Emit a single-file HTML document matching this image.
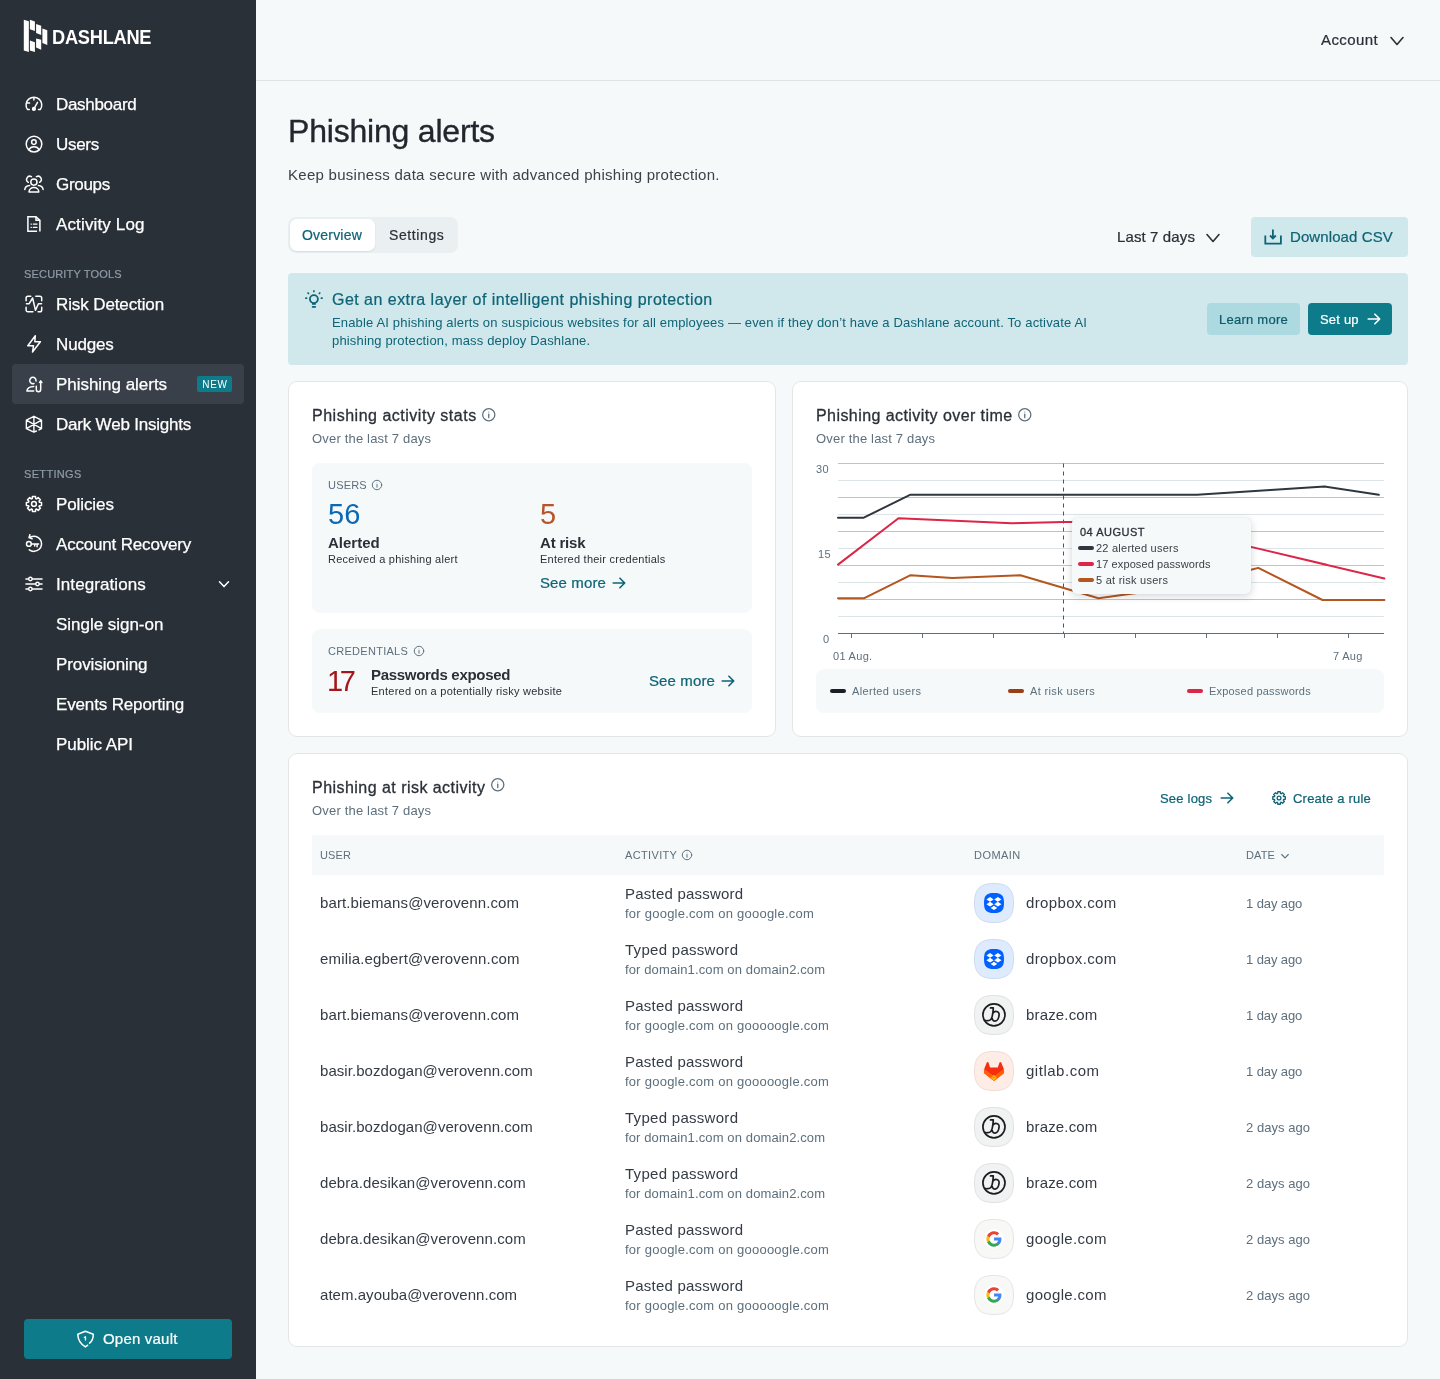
<!DOCTYPE html>
<html lang="en">
<head>
<meta charset="utf-8">
<title>Phishing alerts</title>
<style>
*{box-sizing:border-box;margin:0;padding:0}
html,body{width:1440px;height:1379px;overflow:hidden}
body{font-family:"Liberation Sans",sans-serif;background:#f5f9fa;color:#2b3038;position:relative}
#wrap{position:absolute;left:0;top:0;width:1440px;height:1379px;will-change:transform}
.abs{position:absolute;white-space:nowrap}
svg{display:block}
/* ---------- sidebar ---------- */
#side{position:absolute;left:0;top:0;width:256px;height:1379px;background:#2a3038}
.nav{position:absolute;left:56px;height:40px;line-height:42px;font-size:17px;color:#fff;white-space:nowrap;letter-spacing:-0.15px;-webkit-text-stroke:.25px #fff}
.nico{position:absolute;left:24px;width:20px;height:20px;color:#fff}
.sect{position:absolute;left:24px;font-size:11px;line-height:14px;color:#8e9ca6;letter-spacing:.1px;white-space:nowrap;-webkit-text-stroke:.2px}
#active{position:absolute;left:12px;top:364px;width:232px;height:40px;background:#3a4049;border-radius:4px}
#new{position:absolute;left:197px;top:376px;width:35px;height:16px;background:#0e7b8a;border-radius:2px;color:#fff;font-size:10px;line-height:18.500px;text-align:center;letter-spacing:.7px;padding-left:1px}
#vault{position:absolute;left:24px;top:1319px;width:208px;height:40px;background:#0e7b8a;border-radius:4px}
/* ---------- main ---------- */
#hdrline{position:absolute;left:256px;top:80px;width:1184px;height:1px;background:#dde4e8}
.teal{color:#0e6476}
.card{position:absolute;background:#fff;border:1px solid #e3e5e6;border-radius:9px}
.ctitle{position:absolute;font-size:16px;line-height:20px;color:#2b3038;white-space:nowrap;letter-spacing:.45px;-webkit-text-stroke:.3px #2b3038}
.csub{position:absolute;font-size:13px;line-height:16px;color:#5d6f7c;white-space:nowrap;letter-spacing:.18px}
.inner{position:absolute;background:#f5f9fa;border-radius:8px}
.lbl{position:absolute;font-size:11px;line-height:14px;color:#5d6f7c;letter-spacing:.6px;white-space:nowrap}
.big{position:absolute;font-size:28px;line-height:32px;white-space:nowrap}
.bold15{position:absolute;font-size:15px;line-height:18px;font-weight:700;color:#2b3038;white-space:nowrap}
.small11{position:absolute;font-size:11px;line-height:14px;color:#2b3038;white-space:nowrap;letter-spacing:.25px}
.link15{position:absolute;font-size:15px;line-height:18px;color:#0e6476;white-space:nowrap;letter-spacing:.12px}
.tt{font-size:11px;line-height:14px;color:#3b4149;letter-spacing:.15px}
.lg{font-size:11px;line-height:14px;color:#5d6f7c;letter-spacing:.35px}
.r15{font-size:15px;line-height:20px;color:#353b44;letter-spacing:.12px}
.r13{font-size:13px;line-height:16px;color:#5d6f7c;letter-spacing:.2px}
.m{-webkit-text-stroke:.22px}
</style>
</head>
<body>
<div id="wrap">
<!-- ================= SIDEBAR ================= -->
<div id="side">
  <svg class="abs" style="left:23px;top:19px" width="26" height="34" viewBox="23 19 26 34" fill="#fff"><path d="M23.800 19.800 28.850 21.300V52.100L23.800 50.400zM29.900 19.800l5 1.700v9.600l-5-1.900zM29.900 40.500l5 1.700v9.900l-5-1.700zM36.100 23.900l5.100 1.800V35l-5.100-1.950zM36.100 38.400l5.100 1.400v10l-5.100-2.300zM42.400 28.600l4.900 1.700v14.600L42.400 43z"/></svg>
<div class="abs" style="left:52px;top:25px;font-size:20.500px;line-height:24px;font-weight:700;color:#fff;transform:scaleX(.89);transform-origin:0 50%;letter-spacing:-.3px">DASHLANE</div>
  <div id="active"></div>
  <svg class="nico" style="top:94px" viewBox="0 0 20 20" fill="none" stroke="#fff" stroke-width="1.5" stroke-linecap="round" stroke-linejoin="round"><path d="M5.3 15.4H3.4A7.85 7.85 0 1 1 16.400 15.400H14.500M9.900 3.900v2.200M3.400 9.100h2.200M10.600 13.600 13.500 8.400"/><circle cx="9.900" cy="14.900" r="2.100" fill="#fff" stroke="none"/></svg>
<svg class="nico" style="top:134px" viewBox="0 0 20 20" fill="none" stroke="#fff" stroke-width="1.5" stroke-linecap="round" stroke-linejoin="round"><circle cx="10" cy="10.100" r="7.800"/><circle cx="9.900" cy="8.100" r="2.300"/><path d="M4.800 15.700C5.900 13.700 7.700 12.700 10 12.700s4.100 1 5.200 3"/></svg>
<svg class="nico" style="top:174px" viewBox="0 0 20 20" fill="none" stroke="#fff" stroke-width="1.5" stroke-linecap="round" stroke-linejoin="round"><circle cx="9.900" cy="8.100" r="3.100"/><path d="M5 18c0-2.700 2.200-4.400 4.900-4.400s4.900 1.700 4.900 4.400z"/><path d="M7.400 2.700A3.100 3.100 0 0 0 4.300 8.300M12.500 2.700a3.100 3.100 0 0 1 3.100 5.600M.8 15.500c.3-2.200 2.100-3.700 4.700-3.900M19.100 15.500c-.3-2.200-2.100-3.700-4.700-3.900"/></svg>
<svg class="nico" style="top:214px" viewBox="0 0 20 20" fill="none" stroke="#fff" stroke-width="1.5" stroke-linecap="round" stroke-linejoin="round"><path d="M13.100 17.200H3.900V2.800H12L15.900 6.300V17.500M12 2.800V6.300H15.900" stroke-linejoin="miter" stroke-linecap="butt"/><path d="M7 10.100h.4M9.300 10.100h3.700M7 13.300h.4M9.300 13.300h3.700" stroke-width="1.250"/></svg>
<svg class="nico" style="top:294px" viewBox="0 0 20 20" fill="none" stroke="#fff" stroke-width="1.5" stroke-linecap="round" stroke-linejoin="round"><path d="M2.100 6.800V4.100a1.800 1.800 0 0 1 1.800-1.800h2.900M11.800 2.300h4.100a1.800 1.800 0 0 1 1.800 1.800v2.700M2.100 13.300v2.600a1.800 1.800 0 0 0 1.800 1.800h5M14.100 17.700h1.800a1.800 1.800 0 0 0 1.800-1.800v-2.600M2.400 9.700h2.800L8.600 4l2.900 12.300 2.900-6.600h3.100"/></svg>
<svg class="nico" style="top:334px" viewBox="0 0 20 20" fill="none" stroke="#fff" stroke-width="1.5" stroke-linecap="round" stroke-linejoin="round"><path d="M11.300 1.800 3.800 11.800h5.700l-1 6.200 7.900-10.300h-5.600z" stroke-linejoin="round"/></svg>
<svg class="nico" style="top:374px" viewBox="0 0 20 20" fill="none" stroke="#fff" stroke-width="1.5" stroke-linecap="round" stroke-linejoin="round"><path d="M9.980 9.460A3.150 3.150 0 1 1 12 7.050M9.700 12.400C5.700 12.500 3.200 14.200 2.900 17h6.800M12.300 12.300v3.200a2.200 2.200 0 0 0 4.400 0V7.600M15.500 8.400l1.200-1.500 1.200 1.500"/></svg>
<svg class="nico" style="top:414px" viewBox="0 0 20 20" fill="none" stroke="#fff" stroke-width="1.400" stroke-linecap="round" stroke-linejoin="round"><path d="M15 15.900 17.500 14.600V6.200L9.900 2.300 2.350 6.200V14.600L9.900 18.100 12.400 17M9.900 2.300V18.100M2.350 6.200 17.500 14.600M17.500 6.200 2.350 14.600"/></svg>
<svg class="nico" style="top:494px" viewBox="0 0 20 20" fill="none" stroke="#fff" stroke-width="1.500" stroke-linecap="round" stroke-linejoin="round"><path d="M8.27 4.50 L8.42 2.40 L11.48 2.40 L11.63 4.50 L12.61 4.91 L14.20 3.53 L16.37 5.70 L14.99 7.29 L15.40 8.27 L17.50 8.42 L17.50 11.48 L15.40 11.63 L14.99 12.61 L16.37 14.20 L14.20 16.37 L12.61 14.99 L11.63 15.40 L11.48 17.50 L8.42 17.50 L8.27 15.40 L7.29 14.99 L5.70 16.37 L3.53 14.20 L4.91 12.61 L4.50 11.63 L2.40 11.48 L2.40 8.42 L4.50 8.27 L4.91 7.29 L3.53 5.70 L5.70 3.53 L7.29 4.91Z"/><circle cx="9.950" cy="9.950" r="2.400"/></svg>
<svg class="nico" style="top:534px" viewBox="0 0 20 20" fill="none" stroke="#fff" stroke-width="1.5" stroke-linecap="round" stroke-linejoin="round"><path d="M6.700 2.900A7.600 7.600 0 1 1 5.300 15.800M5.900.7 5 3.600l3.100 1.100"/><circle cx="4.900" cy="9.900" r="2.400"/><path d="M7.400 9.900h7.200M10.700 9.900v2M13.100 9.900v2.800"/></svg>
<svg class="nico" style="top:574px" viewBox="0 0 20 20" fill="none" stroke="#fff" stroke-width="1.5" stroke-linecap="round" stroke-linejoin="round"><path d="M2 5h16M2 10h16M2 15h16" stroke-width="1.600"/><g fill="#2a3038" stroke-width="1.400"><circle cx="6.400" cy="5" r="1.700"/><circle cx="13.500" cy="10" r="1.700"/><circle cx="6.400" cy="15" r="1.700"/></g></svg>
<svg class="abs" style="left:216px;top:576px" width="16" height="16" viewBox="0 0 16 16" fill="none" stroke="#fff" stroke-width="1.500" stroke-linecap="round" stroke-linejoin="round"><path d="M3.500 5.700 8 10.600l4.500-4.900"/></svg>

  <div class="nav" style="top:84px;letter-spacing:-0.31px">Dashboard</div>
  <div class="nav" style="top:124px;letter-spacing:-0.3px">Users</div>
  <div class="nav" style="top:164px;letter-spacing:-0.3px">Groups</div>
  <div class="nav" style="top:204px;letter-spacing:0.14px">Activity Log</div>
  <div class="sect" style="top:267px;letter-spacing:.17px">SECURITY TOOLS</div>
  <div class="nav" style="top:284px;letter-spacing:-0.11px">Risk Detection</div>
  <div class="nav" style="top:324px;letter-spacing:-0.15px">Nudges</div>
  <div class="nav" style="top:364px;letter-spacing:-0.03px">Phishing alerts</div>
  <div id="new">NEW</div>
  <div class="nav" style="top:404px;letter-spacing:-0.2px">Dark Web Insights</div>
  <div class="sect" style="top:467px;letter-spacing:.33px">SETTINGS</div>
  <div class="nav" style="top:484px;letter-spacing:-0.1px">Policies</div>
  <div class="nav" style="top:524px;letter-spacing:-0.18px">Account Recovery</div>
  <div class="nav" style="top:564px;letter-spacing:0.08px">Integrations</div>
  <div class="nav" style="top:604px;letter-spacing:-0.03px">Single sign-on</div>
  <div class="nav" style="top:644px;letter-spacing:-0.1px">Provisioning</div>
  <div class="nav" style="top:684px;letter-spacing:-0.15px">Events Reporting</div>
  <div class="nav" style="top:724px;letter-spacing:-0.05px">Public API</div>
  <div id="vault">
    <svg class="abs" style="left:52px;top:9.400px" width="20" height="20" viewBox="76 1328 20 20" fill="none" stroke="#fff" stroke-width="1.500" stroke-linecap="round" stroke-linejoin="round"><path d="M87.700 1345.200 85.400 1346.900C80 1343.500 77.800 1339.600 77.800 1334.200L85.400 1331.300 93.300 1334.200C93.300 1338 92.300 1341 89.600 1343.200"/><path d="M84.300 1337.500l1.200-.7v3.300" stroke-width="1.300"/></svg>
    <div class="abs m" style="left:79px;top:0;line-height:40px;font-size:15px;color:#fff;letter-spacing:.2px">Open vault</div>
  </div>
</div>

<!-- ================= HEADER ================= -->
<div class="abs m" style="left:1321px;top:30px;font-size:15px;line-height:20px;color:#2b3038;letter-spacing:.4px">Account</div>
<svg class="abs" style="left:1387px;top:30.5px" width="20" height="20" viewBox="0 0 20 20" fill="none" stroke="#2b3038" stroke-width="1.6" stroke-linecap="round" stroke-linejoin="round"><path d="M4.0 6.5 10 13.5 16.0 6.5"/></svg>
<div id="hdrline"></div>

<div class="abs" style="left:288px;top:111px;font-size:32px;line-height:40px;color:#22262d;letter-spacing:-.2px;-webkit-text-stroke:.35px">Phishing alerts</div>
<div class="abs" style="left:288px;top:165px;font-size:15px;line-height:20px;color:#3b4149;letter-spacing:.275px">Keep business data secure with advanced phishing protection.</div>

<!-- tabs -->
<div class="abs" style="left:288px;top:217px;width:170px;height:36px;background:#eaeff2;border-radius:8px"></div>
<div class="abs" style="left:290px;top:219px;width:85px;height:32px;background:#fff;border-radius:7px;box-shadow:0 1px 2px rgba(0,0,0,.08)"></div>
<div class="abs teal m" style="left:302px;top:225px;font-size:14px;line-height:20px;letter-spacing:.2px">Overview</div>
<div class="abs m" style="left:389px;top:225px;font-size:14px;line-height:20px;color:#2b3038;letter-spacing:.6px">Settings</div>

<div class="abs m" style="left:1117px;top:227px;font-size:15px;line-height:20px;color:#2b3038;letter-spacing:.12px">Last 7 days</div>
<svg class="abs" style="left:1203px;top:227.5px" width="20" height="20" viewBox="0 0 20 20" fill="none" stroke="#2b3038" stroke-width="1.6" stroke-linecap="round" stroke-linejoin="round"><path d="M4.0 6.5 10 13.5 16.0 6.5"/></svg>
<div class="abs" style="left:1251px;top:217px;width:157px;height:40px;background:#cfe8ec;border-radius:4px"></div>
<svg class="abs" style="left:1263px;top:227px" width="20" height="20" viewBox="1263 227 20 20" fill="none" stroke="#0e6476" stroke-width="1.800" stroke-linecap="butt" stroke-linejoin="miter"><path d="M1265.300 235.500V243.700H1280.900V235.500M1272.900 229.600V238M1270 235.500l2.900 2.900 2.900-2.900"/></svg>
<div class="abs teal m" style="left:1290px;top:227px;font-size:15px;line-height:20px;letter-spacing:.1px">Download CSV</div>

<!-- banner -->
<div class="abs" style="left:288px;top:273px;width:1120px;height:92px;background:#d0e8ec;border-radius:4px"></div>
<svg class="abs" style="left:304px;top:289px" width="20" height="20" viewBox="304 289 20 20" fill="none" stroke="#0e6476" stroke-width="1.800" stroke-linecap="round"><circle cx="313.900" cy="299.100" r="4"/><path d="M312 302.900h3.800v1.900H312z" fill="#0e6476" stroke="none"/><path d="M312.600 306.900h2.600" stroke-width="1.700"/><path d="M313.900 290.900v.6M308 293l.5.500M319.800 293l-.5.500M305.900 298.200h.6M321.400 298.200h.600" stroke-width="1.700"/></svg>
<div class="abs teal m" style="left:332px;top:290px;font-size:16px;line-height:20px;letter-spacing:.47px">Get an extra layer of intelligent phishing protection</div>
<div class="abs teal" style="left:332px;top:314px;font-size:13px;line-height:18px;letter-spacing:.16px;white-space:normal;width:790px">Enable AI phishing alerts on suspicious websites for all employees — even if they don’t have a Dashlane account. To activate AI<br>phishing protection, mass deploy Dashlane.</div>
<div class="abs" style="left:1207px;top:303px;width:93px;height:32px;background:#acdae0;border-radius:4px"></div>
<div class="abs m" style="left:1219px;top:310.7px;font-size:13px;line-height:18px;color:#0d5a69;letter-spacing:.25px">Learn more</div>
<div class="abs" style="left:1308px;top:303px;width:84px;height:32px;background:#0e7b8a;border-radius:4px"></div>
<div class="abs m" style="left:1320px;top:310.7px;font-size:13px;line-height:18px;color:#fff;letter-spacing:.2px">Set up</div>
<svg class="abs" style="left:1366px;top:311px" width="16" height="16" viewBox="0 0 16 16" fill="none" stroke="#fff" stroke-width="1.600" stroke-linecap="round" stroke-linejoin="round"><path d="M2.200 8h11.400M8.900 3.200 13.700 8l-4.800 4.800"/></svg>

<!-- ================= CARD 1 : stats ================= -->
<div class="card" style="left:288px;top:381px;width:488px;height:356px"></div>

<div class="ctitle" style="left:312px;top:406px;letter-spacing:.51px">Phishing activity stats</div>
<svg class="abs" style="left:481.25px;top:407.25px" width="15.5" height="15.5" viewBox="0 0 16 16" fill="none" stroke="#5d6f7c" stroke-width="1.3" stroke-linecap="round"><circle cx="8" cy="8" r="6.3"/><path d="M8 7.4v3.6"/><circle cx="8" cy="5.2" r=".55" fill="#5d6f7c" stroke="none"/></svg>
<div class="csub" style="left:312px;top:431px">Over the last 7 days</div>
<div class="inner" style="left:312px;top:463px;width:440px;height:150px"></div>
<div class="lbl" style="left:328px;top:478px;letter-spacing:.2px">USERS</div>
<svg class="abs" style="left:371px;top:479px" width="12" height="12" viewBox="0 0 16 16" fill="none" stroke="#5d6f7c" stroke-width="1.3" stroke-linecap="round"><circle cx="8" cy="8" r="6.3"/><path d="M8 7.4v3.6"/><circle cx="8" cy="5.2" r=".55" fill="#5d6f7c" stroke="none"/></svg>
<div class="big" style="left:328px;top:498px;font-size:29px;color:#0a68b4">56</div>
<div class="big" style="left:540px;top:498px;font-size:29px;color:#b9532a">5</div>
<div class="bold15" style="left:328px;top:534px">Alerted</div>
<div class="bold15" style="left:540px;top:534px;letter-spacing:-.2px">At risk</div>
<div class="small11" style="left:328px;top:552px">Received a phishing alert</div>
<div class="small11" style="left:540px;top:552px">Entered their credentials</div>
<div class="link15 m" style="left:540px;top:574px">See more</div>
<svg class="abs" style="left:611px;top:575px" width="16" height="16" viewBox="0 0 16 16" fill="none" stroke="#0e6476" stroke-width="1.6" stroke-linecap="round" stroke-linejoin="round"><path d="M2.2 8h11.4M8.9 3.2 13.7 8l-4.8 4.8"/></svg>
<div class="inner" style="left:312px;top:629px;width:440px;height:84px"></div>
<div class="lbl" style="left:328px;top:644px;letter-spacing:.28px">CREDENTIALS</div>
<svg class="abs" style="left:413px;top:645px" width="12" height="12" viewBox="0 0 16 16" fill="none" stroke="#5d6f7c" stroke-width="1.3" stroke-linecap="round"><circle cx="8" cy="8" r="6.3"/><path d="M8 7.4v3.6"/><circle cx="8" cy="5.2" r=".55" fill="#5d6f7c" stroke="none"/></svg>
<div class="big" style="left:327px;top:665px;font-size:29px;letter-spacing:-3.500px;color:#a4151c">17</div>
<div class="bold15" style="left:371px;top:666px;letter-spacing:-.3px">Passwords exposed</div>
<div class="small11" style="left:371px;top:684px">Entered on a potentially risky website</div>
<div class="link15 m" style="left:649px;top:672px">See more</div>
<svg class="abs" style="left:720px;top:673px" width="16" height="16" viewBox="0 0 16 16" fill="none" stroke="#0e6476" stroke-width="1.6" stroke-linecap="round" stroke-linejoin="round"><path d="M2.2 8h11.4M8.9 3.2 13.7 8l-4.8 4.8"/></svg>


<!-- ================= CARD 2 : chart ================= -->
<div class="card" style="left:792px;top:381px;width:616px;height:356px"></div>

<div class="ctitle" style="left:816px;top:406px;letter-spacing:.43px">Phishing activity over time</div>
<svg class="abs" style="left:1017.25px;top:407.25px" width="15.5" height="15.5" viewBox="0 0 16 16" fill="none" stroke="#5d6f7c" stroke-width="1.3" stroke-linecap="round"><circle cx="8" cy="8" r="6.3"/><path d="M8 7.4v3.6"/><circle cx="8" cy="5.2" r=".55" fill="#5d6f7c" stroke="none"/></svg>
<div class="csub" style="left:816px;top:431px">Over the last 7 days</div>
<svg class="abs" style="left:810px;top:450px" width="590" height="220" viewBox="0 0 590 220">
<line x1="28" x2="574" y1="13.5" y2="13.5" stroke="#b9c5cd" stroke-width="1"/><line x1="28" x2="574" y1="30.5" y2="30.5" stroke="#dde4e8" stroke-width="1"/><line x1="28" x2="574" y1="47.5" y2="47.5" stroke="#b9c5cd" stroke-width="1"/><line x1="28" x2="574" y1="64.5" y2="64.5" stroke="#dde4e8" stroke-width="1"/><line x1="28" x2="574" y1="81.5" y2="81.5" stroke="#b9c5cd" stroke-width="1"/><line x1="28" x2="574" y1="98.5" y2="98.5" stroke="#dde4e8" stroke-width="1"/><line x1="28" x2="574" y1="115.5" y2="115.5" stroke="#b9c5cd" stroke-width="1"/><line x1="28" x2="574" y1="132.5" y2="132.5" stroke="#dde4e8" stroke-width="1"/><line x1="28" x2="574" y1="149.5" y2="149.5" stroke="#b9c5cd" stroke-width="1"/><line x1="28" x2="574" y1="166.5" y2="166.5" stroke="#dde4e8" stroke-width="1"/><line x1="28" x2="574" y1="183.5" y2="183.5" stroke="#5d6f7c" stroke-width="1.2"/><line x1="41.5" x2="41.5" y1="183.5" y2="188" stroke="#5d6f7c" stroke-width="1"/><line x1="112.5" x2="112.5" y1="183.5" y2="188" stroke="#5d6f7c" stroke-width="1"/><line x1="183.5" x2="183.5" y1="183.5" y2="188" stroke="#5d6f7c" stroke-width="1"/><line x1="254.5" x2="254.5" y1="183.5" y2="188" stroke="#5d6f7c" stroke-width="1"/><line x1="325.5" x2="325.5" y1="183.5" y2="188" stroke="#5d6f7c" stroke-width="1"/><line x1="396.5" x2="396.5" y1="183.5" y2="188" stroke="#5d6f7c" stroke-width="1"/><line x1="467.5" x2="467.5" y1="183.5" y2="188" stroke="#5d6f7c" stroke-width="1"/><line x1="538.5" x2="538.5" y1="183.5" y2="188" stroke="#5d6f7c" stroke-width="1"/><line x1="253.5" x2="253.5" y1="13.5" y2="183.5" stroke="#4a5560" stroke-width="1" stroke-dasharray="4 4"/>
<polyline fill="none" stroke="#30363e" stroke-width="2" stroke-linejoin="round" stroke-linecap="round" points="28.0,67.7 53.8,67.7 100.0,44.8 386.9,44.8 514.6,36.5 568.8,44.8"/><polyline fill="none" stroke="#dc2547" stroke-width="2" stroke-linejoin="round" stroke-linecap="round" points="28.0,114.6 88.5,68.3 201.7,73.3 253.5,71.9 336.0,72.0 441.0,96.9 574.4,128.5"/><polyline fill="none" stroke="#b4561f" stroke-width="2" stroke-linejoin="round" stroke-linecap="round" points="28.0,148.3 53.8,148.3 100.6,125.2 142.3,127.9 210.4,125.2 288.5,148.3 321.0,143.8 390.0,135.0 441.0,119.8 448.3,117.9 512.5,150.0 574.4,150.0"/>
<text x="6" y="23" font-family="Liberation Sans, sans-serif" font-size="11" fill="#5d6f7c" text-anchor="start" letter-spacing=".3">30</text><text x="8" y="108" font-family="Liberation Sans, sans-serif" font-size="11" fill="#5d6f7c" text-anchor="start" letter-spacing=".3">15</text><text x="13" y="193" font-family="Liberation Sans, sans-serif" font-size="11" fill="#5d6f7c" text-anchor="start" letter-spacing=".3">0</text><text x="23" y="210" font-family="Liberation Sans, sans-serif" font-size="11" fill="#5d6f7c" text-anchor="start" letter-spacing=".3">01 Aug.</text><text x="523" y="210" font-family="Liberation Sans, sans-serif" font-size="11" fill="#5d6f7c" text-anchor="start" letter-spacing=".3">7 Aug</text>
</svg>
<div class="abs" style="left:1072px;top:518px;width:179px;height:76px;background:#f5f9fa;border-radius:5px;box-shadow:0 2px 8px rgba(20,30,40,.18),0 0 1px rgba(20,30,40,.15)"></div>
<div class="abs" style="left:1080px;top:525px;font-size:11px;line-height:14px;font-weight:400;-webkit-text-stroke:.3px;color:#2b3038;letter-spacing:.5px">04 AUGUST</div>
<div class="abs" style="left:1078px;top:546.0px;width:16px;height:4px;border-radius:2px;background:#30363e"></div><div class="abs tt" style="left:1096px;top:541px;letter-spacing:.24px">22 alerted users</div>
<div class="abs" style="left:1078px;top:562.0px;width:16px;height:4px;border-radius:2px;background:#dc2547"></div><div class="abs tt" style="left:1096px;top:557px;letter-spacing:.1px">17 exposed passwords</div>
<div class="abs" style="left:1078px;top:578.0px;width:16px;height:4px;border-radius:2px;background:#b4561f"></div><div class="abs tt" style="left:1096px;top:573px;letter-spacing:.25px">5 at risk users</div>
<div class="inner" style="left:816px;top:669px;width:568px;height:44px"></div>
<div class="abs" style="left:830px;top:689px;width:16px;height:4px;border-radius:2px;background:#1c2026"></div><div class="abs lg" style="left:852px;top:684px">Alerted users</div>
<div class="abs" style="left:1008px;top:689px;width:16px;height:4px;border-radius:2px;background:#9c3d12"></div><div class="abs lg" style="left:1030px;top:684px">At risk users</div>
<div class="abs" style="left:1187px;top:689px;width:16px;height:4px;border-radius:2px;background:#dc2547"></div><div class="abs lg" style="left:1209px;top:684px;letter-spacing:.2px">Exposed passwords</div>


<!-- ================= CARD 3 : table ================= -->
<div class="card" style="left:288px;top:753px;width:1120px;height:594px"></div>

<div class="ctitle" style="left:312px;top:778px;letter-spacing:.46px">Phishing at risk activity</div>
<svg class="abs" style="left:490.25px;top:777.25px" width="15.5" height="15.5" viewBox="0 0 16 16" fill="none" stroke="#5d6f7c" stroke-width="1.3" stroke-linecap="round"><circle cx="8" cy="8" r="6.3"/><path d="M8 7.4v3.6"/><circle cx="8" cy="5.2" r=".55" fill="#5d6f7c" stroke="none"/></svg>
<div class="csub" style="left:312px;top:803px">Over the last 7 days</div>
<div class="abs teal m" style="left:1160px;top:790px;font-size:13px;line-height:18px;letter-spacing:.2px">See logs</div>
<svg class="abs" style="left:1219px;top:790px" width="16" height="16" viewBox="0 0 16 16" fill="none" stroke="#0e6476" stroke-width="1.6" stroke-linecap="round" stroke-linejoin="round"><path d="M2.2 8h11.4M8.9 3.2 13.7 8l-4.8 4.8"/></svg>
<svg class="abs" style="left:1271px;top:790px" width="16" height="16" viewBox="0 0 16 16" fill="none" stroke="#0e6476" stroke-width="1.300" stroke-linejoin="round"><path d="M6.66 3.51 L6.78 1.73 L9.32 1.73 L9.44 3.51 L10.24 3.84 L11.59 2.67 L13.38 4.46 L12.21 5.81 L12.54 6.61 L14.32 6.73 L14.32 9.27 L12.54 9.39 L12.21 10.19 L13.38 11.54 L11.59 13.33 L10.24 12.16 L9.44 12.49 L9.32 14.27 L6.78 14.27 L6.66 12.49 L5.86 12.16 L4.51 13.33 L2.72 11.54 L3.89 10.19 L3.56 9.39 L1.78 9.27 L1.78 6.73 L3.56 6.61 L3.89 5.81 L2.72 4.46 L4.51 2.67 L5.86 3.84Z"/><circle cx="8.050" cy="8" r="1.900"/></svg>
<div class="abs teal m" style="left:1293px;top:790px;font-size:13px;line-height:18px;letter-spacing:.22px">Create a rule</div>
<div class="abs" style="left:312px;top:835px;width:1072px;height:40px;background:#f5f9fa"></div>
<div class="lbl" style="left:320px;top:848px;letter-spacing:.1px">USER</div>
<div class="lbl" style="left:625px;top:848px;letter-spacing:.35px">ACTIVITY</div>
<svg class="abs" style="left:681px;top:849px" width="12" height="12" viewBox="0 0 16 16" fill="none" stroke="#5d6f7c" stroke-width="1.3" stroke-linecap="round"><circle cx="8" cy="8" r="6.3"/><path d="M8 7.4v3.6"/><circle cx="8" cy="5.2" r=".55" fill="#5d6f7c" stroke="none"/></svg>
<div class="lbl" style="left:974px;top:848px;letter-spacing:.45px">DOMAIN</div>
<div class="lbl" style="left:1246px;top:848px;letter-spacing:.1px">DATE</div>
<svg class="abs" style="left:1280px;top:850.5px" width="10" height="10" viewBox="0 0 12 12" fill="none" stroke="#5d6f7c" stroke-width="1.300" stroke-linecap="round" stroke-linejoin="round"><path d="M2 4.200 6 8.200l4-4"/></svg>
<div class="abs r15" style="left:320px;top:893px;letter-spacing:0.12px">bart.biemans@verovenn.com</div>
<div class="abs r15" style="left:625px;top:884px;letter-spacing:.22px">Pasted password</div>
<div class="abs r13" style="left:625px;top:906px;letter-spacing:.24px">for google.com on gooogle.com</div>
<div class="abs" style="left:974px;top:883px"><svg width="40" height="40" viewBox="0 0 40 40"><path d="M20 .5C31.5 .5 39.5 4 39.5 20S31.5 39.5 20 39.5.5 36 .5 20 8.5 .5 20 .5Z" fill="#deeafd" stroke="#cddaf0" stroke-width="1"/><path d="M20 10C27.600 10 30 12.400 30 20S27.600 30 20 30 10 27.600 10 20 12.400 10 20 10Z" fill="#0061fe"/><path d="M12.450000000000001 16.4L16.05 13.999999999999998L19.650000000000002 16.4L16.05 18.799999999999997ZM20.25 16.4L23.85 13.999999999999998L27.450000000000003 16.4L23.85 18.799999999999997ZM12.450000000000001 21.2L16.05 18.8L19.650000000000002 21.2L16.05 23.599999999999998ZM20.25 21.2L23.85 18.8L27.450000000000003 21.2L23.85 23.599999999999998ZM16.65 24.9L19.95 22.799999999999997L23.25 24.9L19.95 27.0Z" fill="#fff"/></svg></div>
<div class="abs r15" style="left:1026px;top:893px;letter-spacing:0.36px">dropbox.com</div>
<div class="abs r13" style="left:1246px;top:896px;letter-spacing:-.1px">1 day ago</div>
<div class="abs r15" style="left:320px;top:949px;letter-spacing:0.17px">emilia.egbert@verovenn.com</div>
<div class="abs r15" style="left:625px;top:940px;letter-spacing:.29px">Typed password</div>
<div class="abs r13" style="left:625px;top:962px;letter-spacing:.12px">for domain1.com on domain2.com</div>
<div class="abs" style="left:974px;top:939px"><svg width="40" height="40" viewBox="0 0 40 40"><path d="M20 .5C31.5 .5 39.5 4 39.5 20S31.5 39.5 20 39.5.5 36 .5 20 8.5 .5 20 .5Z" fill="#deeafd" stroke="#cddaf0" stroke-width="1"/><path d="M20 10C27.600 10 30 12.400 30 20S27.600 30 20 30 10 27.600 10 20 12.400 10 20 10Z" fill="#0061fe"/><path d="M12.450000000000001 16.4L16.05 13.999999999999998L19.650000000000002 16.4L16.05 18.799999999999997ZM20.25 16.4L23.85 13.999999999999998L27.450000000000003 16.4L23.85 18.799999999999997ZM12.450000000000001 21.2L16.05 18.8L19.650000000000002 21.2L16.05 23.599999999999998ZM20.25 21.2L23.85 18.8L27.450000000000003 21.2L23.85 23.599999999999998ZM16.65 24.9L19.95 22.799999999999997L23.25 24.9L19.95 27.0Z" fill="#fff"/></svg></div>
<div class="abs r15" style="left:1026px;top:949px;letter-spacing:0.36px">dropbox.com</div>
<div class="abs r13" style="left:1246px;top:952px;letter-spacing:-.1px">1 day ago</div>
<div class="abs r15" style="left:320px;top:1005px;letter-spacing:0.12px">bart.biemans@verovenn.com</div>
<div class="abs r15" style="left:625px;top:996px;letter-spacing:.22px">Pasted password</div>
<div class="abs r13" style="left:625px;top:1018px;letter-spacing:.24px">for google.com on gooooogle.com</div>
<div class="abs" style="left:974px;top:995px"><svg width="40" height="40" viewBox="0 0 40 40"><path d="M20 .5C31.5 .5 39.5 4 39.5 20S31.5 39.5 20 39.5.5 36 .5 20 8.5 .5 20 .5Z" fill="#f1f2f2" stroke="#dfe1e2" stroke-width="1"/><g fill="none" stroke="#1b1d22" stroke-width="1.700" stroke-linecap="round" stroke-linejoin="round"><circle cx="19.950" cy="19.850" r="11.050"/><path d="M16.500 12.900H19.300C19.200 16.200 18.800 19 18.200 21.400 17.600 24 16.500 25.600 14 25.700 12.600 25.800 11.500 25.700 10.700 25.400M18.700 18.400C19.500 17.100 20.800 16.300 22.100 16.400 24.200 16.500 25.300 18 25.100 19.900 24.900 22.600 23.500 26 21 26.100 19.500 26.100 18.500 25.100 18.300 23.500"/></g></svg></div>
<div class="abs r15" style="left:1026px;top:1005px;letter-spacing:0.16px">braze.com</div>
<div class="abs r13" style="left:1246px;top:1008px;letter-spacing:-.1px">1 day ago</div>
<div class="abs r15" style="left:320px;top:1061px;letter-spacing:0.06px">basir.bozdogan@verovenn.com</div>
<div class="abs r15" style="left:625px;top:1052px;letter-spacing:.22px">Pasted password</div>
<div class="abs r13" style="left:625px;top:1074px;letter-spacing:.24px">for google.com on gooooogle.com</div>
<div class="abs" style="left:974px;top:1051px"><svg width="40" height="40" viewBox="0 0 40 40"><path d="M20 .5C31.5 .5 39.5 4 39.5 20S31.5 39.5 20 39.5.5 36 .5 20 8.5 .5 20 .5Z" fill="#feece6" stroke="#f1dbd4" stroke-width="1"/><path d="M10.100 18.300 20 23.500 29.950 18.300 30.100 21.300C30.100 21.800 29.900 22.100 29.600 22.400L20 29.900 10.400 22.400C10.100 22.100 9.900 21.800 9.900 21.300Z" fill="#ff6008"/><path d="M10.100 18.300 12.800 11.600C13.100 10.800 14.200 10.800 14.500 11.600L16.100 16.500H23.800L25.500 11.600C25.800 10.800 26.900 10.800 27.200 11.600L29.950 18.300 20 25.300Z" fill="#f52e12"/><path d="M10.100 18.300 20 25.300 29.950 18.300 30.100 21.300C30.100 21.800 29.900 22.100 29.600 22.400L20 29.900 10.400 22.400C10.100 22.100 9.900 21.800 9.900 21.300Z" fill="#ff6008"/><path d="M19.800 23.700 22.800 26.700 19.850 29.900 16.900 26.800Z" fill="#ffae0d"/><circle cx="19.600" cy="26.500" r=".55" fill="#ff6008"/></svg></div>
<div class="abs r15" style="left:1026px;top:1061px;letter-spacing:0.52px">gitlab.com</div>
<div class="abs r13" style="left:1246px;top:1064px;letter-spacing:-.1px">1 day ago</div>
<div class="abs r15" style="left:320px;top:1117px;letter-spacing:0.06px">basir.bozdogan@verovenn.com</div>
<div class="abs r15" style="left:625px;top:1108px;letter-spacing:.29px">Typed password</div>
<div class="abs r13" style="left:625px;top:1130px;letter-spacing:.12px">for domain1.com on domain2.com</div>
<div class="abs" style="left:974px;top:1107px"><svg width="40" height="40" viewBox="0 0 40 40"><path d="M20 .5C31.5 .5 39.5 4 39.5 20S31.5 39.5 20 39.5.5 36 .5 20 8.5 .5 20 .5Z" fill="#f1f2f2" stroke="#dfe1e2" stroke-width="1"/><g fill="none" stroke="#1b1d22" stroke-width="1.700" stroke-linecap="round" stroke-linejoin="round"><circle cx="19.950" cy="19.850" r="11.050"/><path d="M16.500 12.900H19.300C19.200 16.200 18.800 19 18.200 21.400 17.600 24 16.500 25.600 14 25.700 12.600 25.800 11.500 25.700 10.700 25.400M18.700 18.400C19.500 17.100 20.800 16.300 22.100 16.400 24.200 16.500 25.300 18 25.100 19.900 24.900 22.600 23.500 26 21 26.100 19.500 26.100 18.500 25.100 18.300 23.500"/></g></svg></div>
<div class="abs r15" style="left:1026px;top:1117px;letter-spacing:0.16px">braze.com</div>
<div class="abs r13" style="left:1246px;top:1120px;letter-spacing:.05px">2 days ago</div>
<div class="abs r15" style="left:320px;top:1173px;letter-spacing:0.08px">debra.desikan@verovenn.com</div>
<div class="abs r15" style="left:625px;top:1164px;letter-spacing:.29px">Typed password</div>
<div class="abs r13" style="left:625px;top:1186px;letter-spacing:.12px">for domain1.com on domain2.com</div>
<div class="abs" style="left:974px;top:1163px"><svg width="40" height="40" viewBox="0 0 40 40"><path d="M20 .5C31.5 .5 39.5 4 39.5 20S31.5 39.5 20 39.5.5 36 .5 20 8.5 .5 20 .5Z" fill="#f1f2f2" stroke="#dfe1e2" stroke-width="1"/><g fill="none" stroke="#1b1d22" stroke-width="1.700" stroke-linecap="round" stroke-linejoin="round"><circle cx="19.950" cy="19.850" r="11.050"/><path d="M16.500 12.900H19.300C19.200 16.200 18.800 19 18.200 21.400 17.600 24 16.500 25.600 14 25.700 12.600 25.800 11.500 25.700 10.700 25.400M18.700 18.400C19.500 17.100 20.800 16.300 22.100 16.400 24.200 16.500 25.300 18 25.100 19.900 24.900 22.600 23.500 26 21 26.100 19.500 26.100 18.500 25.100 18.300 23.500"/></g></svg></div>
<div class="abs r15" style="left:1026px;top:1173px;letter-spacing:0.16px">braze.com</div>
<div class="abs r13" style="left:1246px;top:1176px;letter-spacing:.05px">2 days ago</div>
<div class="abs r15" style="left:320px;top:1229px;letter-spacing:0.08px">debra.desikan@verovenn.com</div>
<div class="abs r15" style="left:625px;top:1220px;letter-spacing:.22px">Pasted password</div>
<div class="abs r13" style="left:625px;top:1242px;letter-spacing:.24px">for google.com on gooooogle.com</div>
<div class="abs" style="left:974px;top:1219px"><svg width="40" height="40" viewBox="0 0 40 40"><path d="M20 .5C31.5 .5 39.5 4 39.5 20S31.5 39.5 20 39.5.5 36 .5 20 8.5 .5 20 .5Z" fill="#f8f8f7" stroke="#e3e5e5" stroke-width="1"/><circle cx="20" cy="20" r="10" fill="#fff"/><g transform="translate(12,11.900) scale(.335)"><path fill="#4285F4" d="M46.100 24.500c0-1.600-.1-3.100-.4-4.500H24v8.500h12.400c-.5 2.900-2.100 5.300-4.500 6.900v5.700h7.300c4.300-3.900 6.900-9.700 6.900-16.600z"/><path fill="#34A853" d="M24 47c6.200 0 11.400-2 15.200-5.500l-7.300-5.700c-2.100 1.400-4.700 2.200-7.900 2.200-6 0-11.100-4.100-13-9.600H3.500v5.900C7.300 41.800 15 47 24 47z"/><path fill="#FBBC05" d="M11 28.400c-.5-1.400-.7-2.900-.7-4.400s.3-3 .7-4.400v-5.900H3.500C1.900 16.800 1 20.300 1 24s.9 7.200 2.500 10.300l7.500-5.900z"/><path fill="#EA4335" d="M24 10c3.400 0 6.400 1.200 8.800 3.400l6.500-6.500C35.400 3.200 30.200 1 24 1 15 1 7.300 6.200 3.500 13.700l7.500 5.900c1.900-5.500 7-9.600 13-9.600z"/></g></svg></div>
<div class="abs r15" style="left:1026px;top:1229px;letter-spacing:0.33px">google.com</div>
<div class="abs r13" style="left:1246px;top:1232px;letter-spacing:.05px">2 days ago</div>
<div class="abs r15" style="left:320px;top:1285px;letter-spacing:0.04px">atem.ayouba@verovenn.com</div>
<div class="abs r15" style="left:625px;top:1276px;letter-spacing:.22px">Pasted password</div>
<div class="abs r13" style="left:625px;top:1298px;letter-spacing:.24px">for google.com on gooooogle.com</div>
<div class="abs" style="left:974px;top:1275px"><svg width="40" height="40" viewBox="0 0 40 40"><path d="M20 .5C31.5 .5 39.5 4 39.5 20S31.5 39.5 20 39.5.5 36 .5 20 8.5 .5 20 .5Z" fill="#f8f8f7" stroke="#e3e5e5" stroke-width="1"/><circle cx="20" cy="20" r="10" fill="#fff"/><g transform="translate(12,11.900) scale(.335)"><path fill="#4285F4" d="M46.100 24.500c0-1.600-.1-3.100-.4-4.500H24v8.500h12.400c-.5 2.900-2.100 5.300-4.500 6.900v5.700h7.300c4.300-3.900 6.900-9.700 6.900-16.600z"/><path fill="#34A853" d="M24 47c6.200 0 11.400-2 15.200-5.500l-7.300-5.700c-2.100 1.400-4.700 2.200-7.900 2.200-6 0-11.100-4.100-13-9.600H3.500v5.900C7.300 41.800 15 47 24 47z"/><path fill="#FBBC05" d="M11 28.400c-.5-1.400-.7-2.900-.7-4.400s.3-3 .7-4.400v-5.900H3.500C1.900 16.800 1 20.300 1 24s.9 7.200 2.500 10.300l7.500-5.900z"/><path fill="#EA4335" d="M24 10c3.400 0 6.400 1.200 8.800 3.400l6.500-6.500C35.400 3.200 30.200 1 24 1 15 1 7.300 6.200 3.500 13.700l7.500 5.900c1.900-5.500 7-9.600 13-9.600z"/></g></svg></div>
<div class="abs r15" style="left:1026px;top:1285px;letter-spacing:0.33px">google.com</div>
<div class="abs r13" style="left:1246px;top:1288px;letter-spacing:.05px">2 days ago</div>


</div>
</body>
</html>
